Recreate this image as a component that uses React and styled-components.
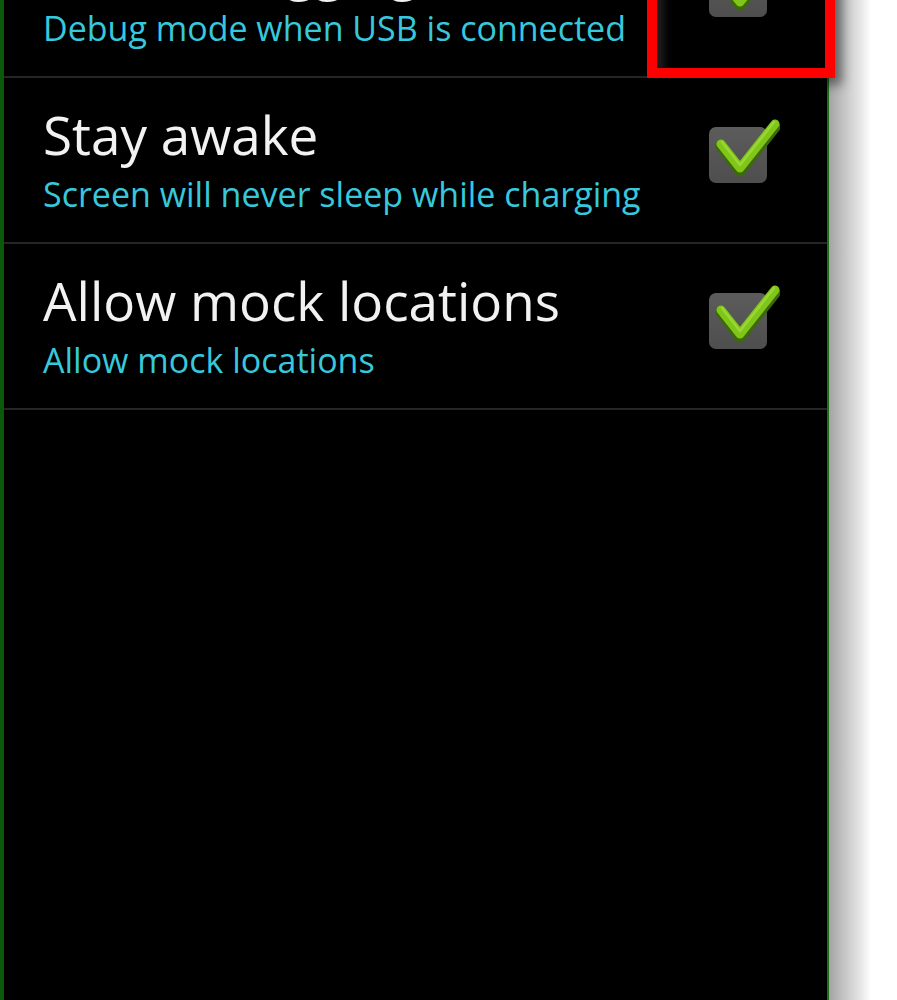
import React from "react";
import styled, { createGlobalStyle } from "styled-components";

const settings = [
  { title: "USB debugging", summary: "Debug mode when USB is connected", highlighted: true },
  { title: "Stay awake", summary: "Screen will never sleep while charging" },
  { title: "Allow mock locations", summary: "Allow mock locations" },
];

/* the android 2.x style green check drawn over a grey square */
function CheckBox() {
  return (
    <CheckIcon width="75" height="70" viewBox="0 0 75 70">
      <defs>
        <linearGradient id="boxFill" x1="0" y1="0" x2="0" y2="1">
          <stop offset="0" stopColor="#5c5c5c" />
          <stop offset="1" stopColor="#4e4e4e" />
        </linearGradient>
      </defs>
      <rect x="4" y="10" width="58" height="56" rx="7" fill="url(#boxFill)" />
      <polyline
        points="16,27 35,52 70,8"
        fill="none"
        stroke="#3c6a08"
        strokeWidth="11"
        strokeLinecap="round"
        strokeLinejoin="round"
        transform="translate(0 2)"
      />
      <polyline
        points="16,27 35,51 70,7"
        fill="none"
        stroke="#80c51a"
        strokeWidth="9"
        strokeLinecap="round"
        strokeLinejoin="round"
      />
      <polyline
        points="17,25 35,48 69,5"
        fill="none"
        stroke="#a3e03a"
        strokeWidth="2.5"
        strokeLinecap="round"
        strokeLinejoin="round"
        opacity="0.7"
      />
    </CheckIcon>
  );
}

export default function App() {
  return (
    <>
      <GlobalStyle />
      <Page>
        <Panel>
          <List>
            {settings.map((item) => (
              <Row key={item.title}>
                <Texts>
                  <Title>{item.title}</Title>
                  <Summary>{item.summary}</Summary>
                </Texts>
                <CheckBox />
              </Row>
            ))}
          </List>
        </Panel>
        <PanelShadow />
        <Highlight />
      </Page>
    </>
  );
}

// - Styled Components - //
const GlobalStyle = createGlobalStyle`
  * { box-sizing: border-box; }
  body {
    margin: 0;
    background: white;
    font-family: "Open Sans", "Liberation Sans", sans-serif;
  }
`;

const Page = styled.div`
  position: relative;
  display: flex;
  width: 897px;
  height: 1000px;
  overflow: hidden;
  background: white;
`;

const Panel = styled.div`
  flex: 0 0 829px;
  height: 100%;
  background: #000;
  border-left: 4px solid #0b5a0b;
  border-right: 2px solid #17701a;
`;

const PanelShadow = styled.div`
  flex: 0 0 42px;
  background: linear-gradient(to right, #a4a4a4, #c4c4c4 35%, #e6e6e6 75%, #fff);
`;

// List
const List = styled.div`
  display: flex;
  flex-direction: column;
  margin-top: -88px;
`;

const Row = styled.div`
  display: flex;
  align-items: center;
  justify-content: space-between;
  height: 166px;
  padding: 0 47px 2px 39px;
  border-bottom: 2px solid #252525;
`;

const Texts = styled.div`
  display: flex;
  flex-direction: column;
`;

const Title = styled.div`
  font-size: 53px;
  line-height: 60px;
  color: #f2f2f2;
  white-space: nowrap;
`;

const Summary = styled.div`
  margin-top: 9px;
  font-size: 34px;
  line-height: 40px;
  color: #38c8dc;
  white-space: nowrap;
`;

const CheckIcon = styled.svg`
  flex: 0 0 auto;
  align-self: flex-start;
  margin-top: 39px;
`;

// Annotation
const Highlight = styled.div`
  position: absolute;
  left: 647px;
  top: -20px;
  width: 188px;
  height: 98px;
  border: 10px solid #ff0000;
  box-shadow: 7px 7px 10px rgba(0, 0, 0, 0.45),
    inset 14px 0 10px -8px rgba(70, 70, 70, 0.5);
`;
